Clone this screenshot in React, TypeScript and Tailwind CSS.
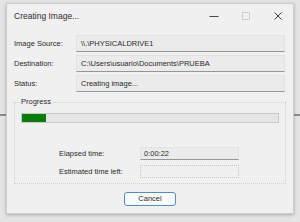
import React from "react";

const fields = [
  { label: "Image Source:", value: "\\\\.\\PHYSICALDRIVE1" },
  { label: "Destination:", value: "C:\\Users\\usuario\\Documents\\PRUEBA" },
  { label: "Status:", value: "Creating image..." },
];

function TitleBar() {
  return (
    <div className="flex h-[24px] items-center pl-[7px] pr-[10px]">
      <span className="flex-1 text-[8.5px] text-[#2e2e2e]">Creating Image...</span>
      <div className="flex items-center">
        <svg width="12" height="12" viewBox="0 0 12 12" className="mr-[20px]">
          <path d="M1.5 6.5h9" stroke="#4a4a4a" strokeWidth="1" />
        </svg>
        <svg width="12" height="12" viewBox="0 0 12 12" className="mr-[21px]">
          <rect x="2.5" y="2.5" width="7" height="7" rx="0.5" fill="none" stroke="#cdcdcd" strokeWidth="1" />
        </svg>
        <svg width="10" height="10" viewBox="0 0 10 10">
          <path d="M1.5 1.5l7 7M8.5 1.5l-7 7" stroke="#404040" strokeWidth="1" />
        </svg>
      </div>
    </div>
  );
}

export default function App() {
  const progress = 9.5;

  return (
    <div className="relative h-[222px] w-[300px] overflow-hidden bg-[#e4e4e4] px-[6px] pt-[3px] font-['Liberation_Sans',Arial,sans-serif] text-[7.5px] text-[#2a2a2a]">
      <div className="absolute left-0 right-0 top-[114px] h-[2px] bg-[#8c8c8c]" />

      <div className="relative flex h-[211px] flex-col border border-[#cdcdcd] bg-[#f0f0f0] shadow-[0_1px_3px_rgba(0,0,0,0.25)]">
        <TitleBar />

        <div className="flex flex-col px-[7px] pt-[7px]">
          <div className="flex flex-col gap-[3px]">
            {fields.map((f) => (
              <div key={f.label} className="flex h-[17px] items-center">
                <span className="w-[62px] shrink-0">{f.label}</span>
                <div className="mr-[1px] flex h-full flex-1 items-center border border-[#e2e2e2] border-b-[#959595] bg-[#ebebeb] pl-[4px]">
                  {f.value}
                </div>
              </div>
            ))}
          </div>

          <fieldset className="mt-[5px] border border-dotted border-[#cfcfcf] px-[6px] pb-[5px]">
            <legend className="ml-[-1px] px-[1px] leading-[10px]">Progress</legend>

            <div className="mt-[6px] h-[10px] border border-[#c8c8c8] bg-[#e6e6e6]">
              <div className="h-full bg-[#0b7d0b]" style={{ width: `${progress}%` }} />
            </div>

            <div className="mt-[24px] flex flex-col gap-[5px] pl-[38px]">
              <div className="flex h-[13px] items-center">
                <span className="w-[81px] shrink-0">Elapsed time:</span>
                <div className="flex h-full w-[99px] items-center border border-[#e2e2e2] border-b-[#959595] bg-[#ebebeb] pl-[3px]">
                  0:00:22
                </div>
              </div>
              <div className="flex h-[13px] items-center">
                <span className="w-[81px] shrink-0">Estimated time left:</span>
                <div className="h-full w-[99px] border border-dotted border-[#c6c6c6]" />
              </div>
            </div>
          </fieldset>

          <div className="mt-[8px] flex justify-center">
            <button
              type="button"
              className="flex h-[14px] w-[52px] items-center justify-center rounded-[3px] border border-[#4a8fd6] bg-[#fbfbfb] text-[7.5px] text-[#2a2a2a]"
            >
              Cancel
            </button>
          </div>
        </div>
      </div>
    </div>
  );
}
